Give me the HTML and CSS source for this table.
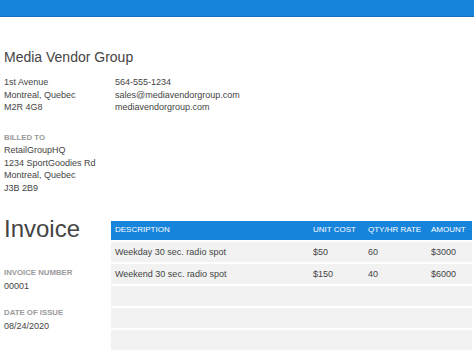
FILE: index.html
```html
<!DOCTYPE html>
<html>
<head>
<meta charset="utf-8">
<link rel="stylesheet" href="styles.css">
</head>
<body>
<div class="topbar"></div>
<div class="page">
  <h1 class="vendor">Media Vendor Group</h1>
  <div class="contact">
    <div class="col-left">
      <div>1st Avenue</div>
      <div>Montreal, Quebec</div>
      <div>M2R 4G8</div>
    </div>
    <div class="col-right">
      <div>564-555-1234</div>
      <div>sales@mediavendorgroup.com</div>
      <div>mediavendorgroup.com</div>
    </div>
  </div>
  <div class="billed">
    <div class="label">BILLED TO</div>
    <div>RetailGroupHQ</div>
    <div>1234 SportGoodies Rd</div>
    <div>Montreal, Quebec</div>
    <div>J3B 2B9</div>
  </div>
  <div class="lower">
    <div class="meta">
      <div class="title">Invoice</div>
      <div class="field">
        <div class="label">INVOICE NUMBER</div>
        <div>00001</div>
      </div>
      <div class="field">
        <div class="label">DATE OF ISSUE</div>
        <div>08/24/2020</div>
      </div>
    </div>
    <table class="items">
      <thead>
        <tr><th class="c-desc">DESCRIPTION</th><th class="c-cost">UNIT COST</th><th class="c-qty">QTY/HR RATE</th><th class="c-amt">AMOUNT</th></tr>
      </thead>
      <tbody>
        <tr><td>Weekday 30 sec. radio spot</td><td>$50</td><td>60</td><td>$3000</td></tr>
        <tr><td>Weekend 30 sec. radio spot</td><td>$150</td><td>40</td><td>$6000</td></tr>
        <tr><td></td><td></td><td></td><td></td></tr>
        <tr><td></td><td></td><td></td><td></td></tr>
        <tr><td></td><td></td><td></td><td></td></tr>
      </tbody>
    </table>
  </div>
</div>
</body>
</html>
```

FILE: styles.css
```css
html, body {
  margin: 0;
  padding: 0;
  background: #ffffff;
  font-family: "Liberation Sans", Arial, sans-serif;
  color: #444444;
  overflow: hidden;
}

.topbar {
  height: 16px;
  background: #1784dc;
  border-bottom: 1px solid #1170c0;
}

.page {
  padding: 32px 2px 0 4px;
  font-size: 9px;
  line-height: 12.5px;
}

.vendor {
  margin: 0;
  font-size: 14px;
  line-height: 17px;
  font-weight: normal;
  color: #444444;
}

.contact {
  display: flex;
  margin-top: 10px;
}

.col-left {
  width: 111px;
}

.billed {
  margin-top: 18px;
}

.label {
  font-size: 7.8px;
  font-weight: bold;
  color: #9a9a9a;
}

.lower {
  display: flex;
  margin-top: 21px;
}

.meta {
  width: 107px;
  flex: none;
}

.title {
  font-size: 24px;
  line-height: 28px;
  color: #444444;
}

.field {
  margin-top: 24px;
}

.field + .field {
  margin-top: 15px;
}

.items {
  flex: 1;
  margin-top: 4px;
  border-collapse: separate;
  border-spacing: 0 2px;
  font-size: 9px;
}

.items th {
  background: #1784dc;
  color: #ffffff;
  font-size: 8px;
  font-weight: normal;
  text-align: left;
  height: 19px;
  padding: 0 4px;
}

.items td {
  background: #f2f2f2;
  height: 20px;
  padding: 0 4px;
  color: #444444;
}

.c-desc { width: 190px; }
.c-cost { width: 47px; }
.c-qty { width: 55px; }
```
